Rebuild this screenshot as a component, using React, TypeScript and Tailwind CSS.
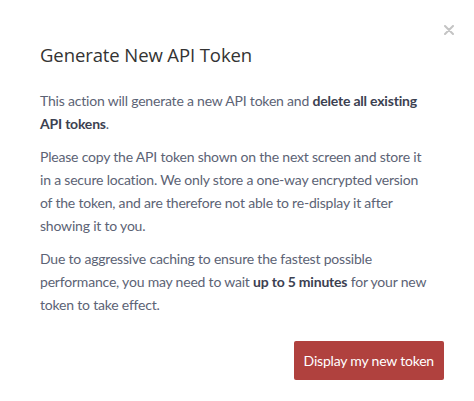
import React from "react";

export default function App() {
  return (
    <div className="relative w-[474px] h-[401px] bg-white overflow-hidden">
      <button className="absolute left-[443px] top-[24px] w-[12px] h-[12px] flex items-center justify-center" aria-label="Close">
        <svg width="10" height="10" viewBox="0 0 10 10">
          <path d="M1 1 L9 9 M9 1 L1 9" stroke="#c4c4c4" strokeWidth="2" strokeLinecap="round" />
        </svg>
      </button>
      <div className="flex flex-col pl-[40px] pr-[45px] pt-[43px]">
        <h2 className="text-[18.5px] leading-[24px] text-[#333333] font-normal tracking-[-0.1px]" style={{ fontFamily: '"Open Sans", "Noto Sans", sans-serif' }}>
          Generate New API Token
        </h2>
        <div className="mt-[22px] flex flex-col gap-[10px] text-[14px] leading-[23px] tracking-[-0.2px] text-[#5c6375]" style={{ fontFamily: 'Lato, "Liberation Sans", sans-serif' }}>
          <p>
            This action will generate a new API token and <strong className="font-bold text-[#3c4151]">delete all existing API tokens</strong>.
          </p>
          <p>
            Please copy the API token shown on the next screen and store it in a secure location. We only store a one-way encrypted version of the token, and are therefore not able to re-display it after showing it to you.
          </p>
          <p>
            Due to aggressive caching to ensure the fastest possible performance, you may need to wait <strong className="font-bold text-[#3c4151]">up to 5 minutes</strong> for your new token to take effect.
          </p>
        </div>
        <div className="flex justify-end mt-[25px] mr-[-15px]">
          <button className="h-[39px] px-[10px] rounded-[2px] bg-[#b0413e] text-white text-[14px] tracking-[-0.2px]" style={{ fontFamily: 'Lato, "Liberation Sans", sans-serif' }}>
            Display my new token
          </button>
        </div>
      </div>
    </div>
  );
}
